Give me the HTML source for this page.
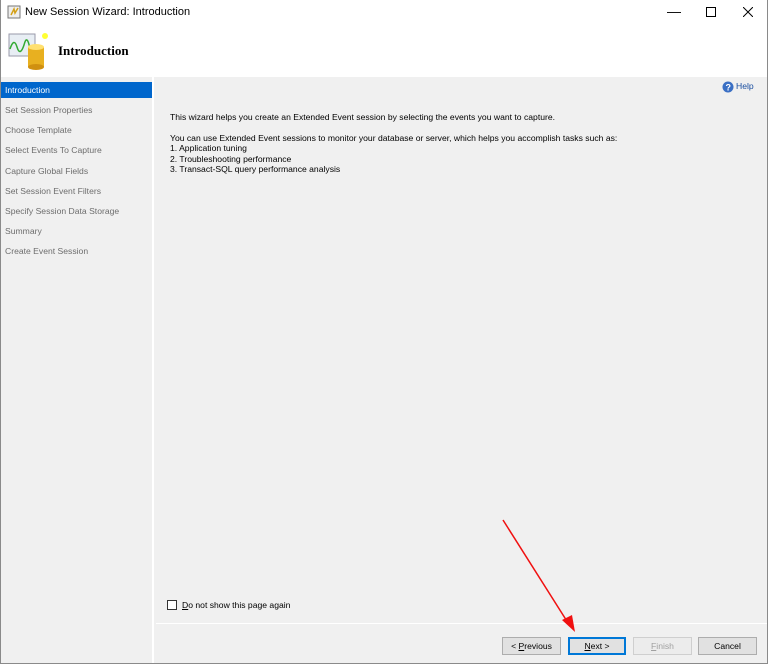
<!DOCTYPE html>
<html><head><style>
*{margin:0;padding:0;box-sizing:border-box}
body{width:768px;height:664px;position:relative;background:#f0f0f0;font-family:"Liberation Sans",sans-serif;font-size:8.6px;color:#000;overflow:hidden}
.win{position:absolute;left:0;top:0;width:768px;height:664px;border:1px solid #8a8a8a;border-top:none}
.title{position:absolute;left:0;top:0;width:768px;height:25px;background:#fff}
.title span{position:absolute;left:25px;top:6px;font-size:11px;color:#000}
.hdr{position:absolute;left:1px;top:25px;width:766px;height:52px;background:#fff}
.nav{position:absolute;left:1px;top:77px;width:153px;height:586px;background:#f0f0f0;border-right:2px solid #fff}
.nav div{height:20.2px;line-height:20px;padding-left:4px;color:#6d6d6d}
.nav div.sel{background:#0066cc;color:#fff;margin-top:5px;margin-bottom:2px;height:16px;line-height:16px}
.t{position:absolute;white-space:nowrap}
.btn{position:absolute;top:637px;height:18px;border:1px solid #adadad;background:#e1e1e1;text-align:center;line-height:16px;font-size:8.6px}
</style></head><body>
<div class="title">
<svg style="position:absolute;left:7px;top:5px" width="14" height="14"><rect x="1" y="1" width="12" height="12" fill="#eee" stroke="#777"/><path d="M4 10 L7 4 L8 8 L11 3" stroke="#d4a017" fill="none" stroke-width="1.5"/></svg>
<span>New Session Wizard: Introduction</span>
<span style="left:667px;top:3px;font-size:14px">&#8212;</span>
<svg style="position:absolute;left:706px;top:7px" width="10" height="10"><rect x="0.5" y="0.5" width="9" height="9" fill="none" stroke="#000"/></svg>
<svg style="position:absolute;left:743px;top:7px" width="10" height="10"><path d="M0 0L10 10M10 0L0 10" stroke="#000"/></svg>
</div>
<div class="hdr">
<svg style="position:absolute;left:7px;top:6px" width="40" height="40"><rect x="1" y="3" width="26" height="22" fill="#e8eef4" stroke="#99a"/><path d="M2 18 Q6 6 9 16 T16 14 Q19 2 22 18" stroke="#3a3" fill="none" stroke-width="1.5"/><circle cx="37" cy="5" r="3" fill="#ff3"/><rect x="20" y="16" width="16" height="20" fill="#e8b020"/><ellipse cx="28" cy="16" rx="8" ry="3" fill="#ffe070"/><ellipse cx="28" cy="36" rx="8" ry="3" fill="#d09010"/></svg>
<span class="t" style="left:57px;top:18px;font-size:13px;font-weight:bold;font-family:'Liberation Serif',serif">Introduction</span>
</div>
<div class="nav">
<div class="sel">Introduction</div>
<div>Set Session Properties</div>
<div>Choose Template</div>
<div>Select Events To Capture</div>
<div>Capture Global Fields</div>
<div>Set Session Event Filters</div>
<div>Specify Session Data Storage</div>
<div>Summary</div>
<div>Create Event Session</div>
</div>
<svg style="position:absolute;left:722px;top:81px" width="12" height="12"><circle cx="6" cy="6" r="5.5" fill="#3a6fc4"/><text x="3.5" y="9.5" font-size="9" fill="#fff" font-family="Liberation Sans" font-weight="bold">?</text></svg>
<span class="t" style="left:736px;top:81px;color:#1a4ea0">Help</span>
<span class="t" style="left:170px;top:112px">This wizard helps you create an Extended Event session by selecting the events you want to capture.</span>
<span class="t" style="left:170px;top:133px">You can use Extended Event sessions to monitor your database or server, which helps you accomplish tasks such as:</span>
<span class="t" style="left:170px;top:143px">1. Application tuning</span>
<span class="t" style="left:170px;top:154px">2. Troubleshooting performance</span>
<span class="t" style="left:170px;top:164px">3. Transact-SQL query performance analysis</span>
<div style="position:absolute;left:167px;top:600px;width:10px;height:10px;border:1px solid #333;background:#fff"></div>
<span class="t" style="left:182px;top:600px"><u>D</u>o not show this page again</span>
<div style="position:absolute;left:156px;top:623px;width:611px;height:1px;background:#fff"></div>
<div class="btn" style="left:502px;width:59px">&lt; <u>P</u>revious</div>
<div class="btn" style="left:568px;width:58px;border-color:#0078d7;border-width:2px;line-height:14px"><u>N</u>ext &gt;</div>
<div class="btn" style="left:633px;width:59px;color:#a0a0a0;border-color:#cfcfcf;background:#ececec"><u>F</u>inish</div>
<div class="btn" style="left:698px;width:59px">Cancel</div>
<svg style="position:absolute;left:0;top:0" width="768" height="664"><line x1="503" y1="520" x2="570" y2="626" stroke="#f01010" stroke-width="1.5"/><polygon points="575,632 562,620 572,615" fill="#f01010"/></svg>
<div class="win"></div>
</body></html>
